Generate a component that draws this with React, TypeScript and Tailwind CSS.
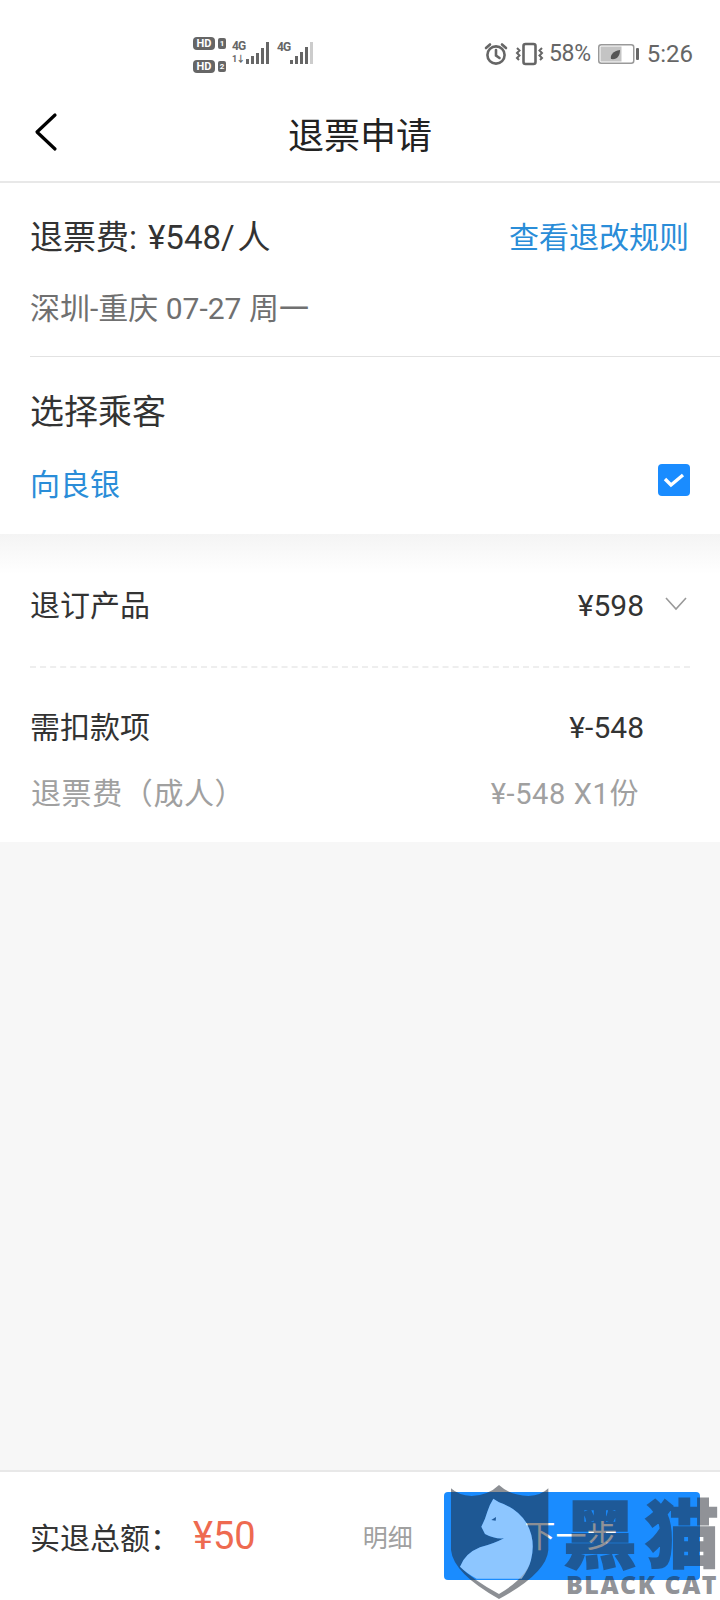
const bars = (heights: number[], colors?: string[]) => (
  <div className="flex items-end gap-[2px]">
    {heights.map((h, i) => (
      <div key={i} className="w-[3px]" style={{ height: h, backgroundColor: colors?.[i] ?? "#666" }} />
    ))}
  </div>
);

function Hd({ n }: { n: string }) {
  return (
    <div className="flex items-center gap-[3px]">
      <div className="w-[22px] h-[13px] rounded-[4px] bg-[#666] text-white text-[11px] leading-[13px] font-bold text-center">HD</div>
      <div className="w-[8px] h-[11px] rounded-[2px] bg-[#666] text-white text-[8px] leading-[11px] font-bold text-center">{n}</div>
    </div>
  );
}

function StatusBar() {
  return (
    <div className="h-[91px] flex items-center pl-[193px] pr-[27px] text-[#666]">
      <div className="flex flex-col gap-[10px] pt-[18px]">
        <Hd n="1" />
        <Hd n="2" />
      </div>
      <div className="ml-[6px] flex items-end pt-[14px] h-[36px]">
        <div className="flex flex-col text-[12px] leading-[11px] font-bold w-[14px] tracking-[-1px]">
          <span>4G</span>
          <span className="text-[9px] leading-[9px] mt-[3px]">1↓</span>
        </div>
        {bars([5, 8, 11, 16, 22])}
      </div>
      <div className="ml-[8px] flex items-end pt-[14px] h-[36px]">
        <div className="flex flex-col text-[12px] leading-[11px] font-bold w-[13px] mb-[11px] tracking-[-1px]">
          <span>4G</span>
        </div>
        {bars([4, 8, 12, 17, 22], ["#666", "#666", "#666", "#666", "#ccc"])}
      </div>
      <div className="ml-auto flex items-center pt-[17px]">
        <svg width="24" height="24" viewBox="0 0 24 24" fill="none" stroke="#666" strokeWidth="2.6">
          <circle cx="12" cy="13" r="8.6" />
          <path d="M12 8v5.5l3.5 2.5M2 6l4-3.5M22 6l-4-3.5" strokeLinecap="round" />
        </svg>
        <svg className="ml-[7px]" width="29" height="24" viewBox="0 0 29 24" fill="none" stroke="#666" strokeWidth="2">
          <rect x="8.5" y="2" width="12" height="20" rx="2" strokeWidth="2.6" />
          <path d="M2 6l2.5 2.5L2 11l2.5 2.5L2 16l2 2M27 6l-2.5 2.5L27 11l-2.5 2.5L27 16l-2 2" />
        </svg>
        <span className="ml-[5px] text-[23px] leading-[28px] tracking-[-0.3px]">58%</span>
        <svg className="ml-[7px]" width="41" height="20" viewBox="0 0 41 20" fill="none">
          <rect x="0.75" y="0.75" width="35" height="18.5" rx="2.5" stroke="#999" strokeWidth="1.5" />
          <rect x="2.5" y="2.5" width="21" height="15" fill="#c4c4c4" />
          <path d="M13 15c-1-4 2-8 9-9 0 6-3 10-9 9z" fill="#555" />
          <rect x="38" y="4" width="3" height="12" rx="1" fill="#666" />
        </svg>
        <span className="ml-[8px] text-[24px] leading-[28px]">5:26</span>
      </div>
    </div>
  );
}

function Watermark() {
  return (
    <div className="absolute left-[430px] top-[1470px] w-[290px] h-[130px]">
      <svg className="absolute left-0 top-0" width="290" height="130" viewBox="0 0 870 390">
        <path
          fillRule="evenodd"
          fill="rgba(35,40,50,0.52)"
          d="M63 55Q85 76 125 78Q175 76 207 45Q240 76 295 78Q335 76 355 55L355 240Q350 310 207 387Q70 310 63 240Z
             M190 86L207 97Q262 115 290 160Q318 210 303 270Q290 322 207 372Q130 330 90 290Q105 250 150 232Q190 222 222 205Q195 208 165 192L154 170Q165 150 172 125Q178 105 190 86Z"
        />
        <path
          fill="rgba(255,255,255,0.5)"
          d="M190 86L207 97Q262 115 290 160Q318 210 303 270Q296 298 275 326L140 326Q110 310 90 290Q105 250 150 232Q190 222 222 205Q195 208 165 192L154 170Q165 150 172 125Q178 105 190 86Z"
        />
        <path fill="#1f5a9b" d="M184 150L198 141L197 152Z" />
      </svg>
      <div className="absolute left-[133px] top-[15px] flex opacity-50 text-[74px] leading-[90px] font-black text-[#232832] [-webkit-text-stroke:1.5px_#232832] [font-family:'Noto_Sans_CJK_SC',sans-serif] whitespace-nowrap">
        <span className="w-[82px]">黑</span>
        <span className="w-[74px]">猫</span>
      </div>
      <div className="absolute left-[136px] top-[100px] text-[25px] leading-[28px] font-extrabold text-[rgba(35,40,50,0.52)] tracking-[1.5px] whitespace-nowrap font-['Open_Sans',sans-serif]">
        BLACK CAT
      </div>
    </div>
  );
}

export default function App() {
  return (
    <div className="relative w-[720px] h-[1600px] bg-[#f7f7f7] flex flex-col overflow-hidden font-[Roboto,'Noto_Sans_CJK_SC',sans-serif]">
      <div className="bg-white border-b-2 border-[#e8e8e8]">
        <StatusBar />
        <div className="relative h-[90px] flex items-center justify-center">
          <svg className="absolute left-[33px] top-[21px]" width="26" height="40" viewBox="0 0 26 40" fill="none" stroke="#000" strokeWidth="3.2" strokeLinecap="round" strokeLinejoin="round">
            <path d="M22 3L4 20l18 17" />
          </svg>
          <span className="text-[36px] leading-[44px] text-[#222] mt-[1px]">退票申请</span>
        </div>
      </div>

      <div className="bg-white pl-[30px] pt-[33px] pb-[29px]">
        <div className="flex items-center justify-between pr-[31px]">
          <div className="flex text-[33px] leading-[44px] text-[#333] whitespace-pre">
            <span>退票费:</span>
            <span className="ml-[11px]">¥548/</span>
            <span className="ml-[3px]">人</span>
          </div>
          <span className="text-[30px] leading-[44px] text-[#2a8dd8]">查看退改规则</span>
        </div>
        <div className="mt-[29px] text-[30px] leading-[40px] text-[#707070]">深圳-重庆 07-27 周一</div>
        <div className="mt-[27px] h-[1px] bg-[#e2e2e2]" />
        <div className="mt-[33px] text-[34px] leading-[44px] text-[#333]">选择乘客</div>
        <div className="mt-[31px] flex items-center justify-between pr-[30px]">
          <span className="text-[30px] leading-[40px] text-[#2a8dd8]">向良银</span>
          <div className="w-[32px] h-[32px] self-start mt-[-1px] rounded-[4px] bg-[#1a8cff] flex items-center justify-center">
            <svg width="22" height="16" viewBox="0 0 22 16" fill="none" stroke="#fff" strokeWidth="3.4">
              <path d="M2 7l6 6L20 3" />
            </svg>
          </div>
        </div>
      </div>

      <div className="bg-white pb-[26px]">
        <div className="h-[40px] bg-linear-to-b from-[#f4f4f4] to-white" />
        <div className="px-[30px]">
          <div className="flex items-center justify-between h-[44px] mt-[10px]">
            <span className="text-[30px] leading-[44px] text-[#333]">退订产品</span>
            <div className="flex items-center pr-[3px]">
              <span className="text-[30px] leading-[44px] text-[#333]">¥598</span>
              <svg className="ml-[21px] mb-[4px]" width="22" height="14" viewBox="0 0 22 14" fill="none" stroke="#999" strokeWidth="1.6">
                <path d="M1 1l10 11L21 1" />
              </svg>
            </div>
          </div>
          <div className="mt-[38px] border-t-2 border-dashed border-[#eeeeee]" />
          <div className="flex items-center justify-between h-[44px] mt-[38px] pr-[46px]">
            <span className="text-[30px] leading-[44px] text-[#333]">需扣款项</span>
            <span className="text-[30px] leading-[44px] text-[#333]">¥-548</span>
          </div>
          <div className="flex items-center justify-between h-[44px] mt-[22px] pr-[51px]">
            <span className="ml-[1px] text-[30px] leading-[44px] text-[#a0a0a0] tracking-[0.6px]">退票费（成人）</span>
            <span className="text-[29px] leading-[44px] text-[#a0a0a0] tracking-[0.6px]">¥-548 X1份</span>
          </div>
        </div>
      </div>

      <div className="flex-1" />

      <div className="h-[130px] bg-white border-t-2 border-[#e8e8e8] flex items-center pl-[30px] pr-[20px]">
        <span className="text-[30px] leading-[44px] text-[#333] mt-[6px]">实退总额：</span>
        <span className="ml-[13px] text-[38px] leading-[44px] text-[#ee6a50]">¥50</span>
        <span className="ml-[107px] text-[25px] leading-[36px] text-[#a0a0a0] mt-[6px]">明细</span>
        <div className="ml-auto mt-[-1px] w-[256px] h-[88px] rounded-[4px] bg-[#1a8cff] flex items-center justify-center text-[31px] text-white pr-[2px] pt-[3px]">
          下一步
        </div>
      </div>

      <Watermark />
    </div>
  );
}
